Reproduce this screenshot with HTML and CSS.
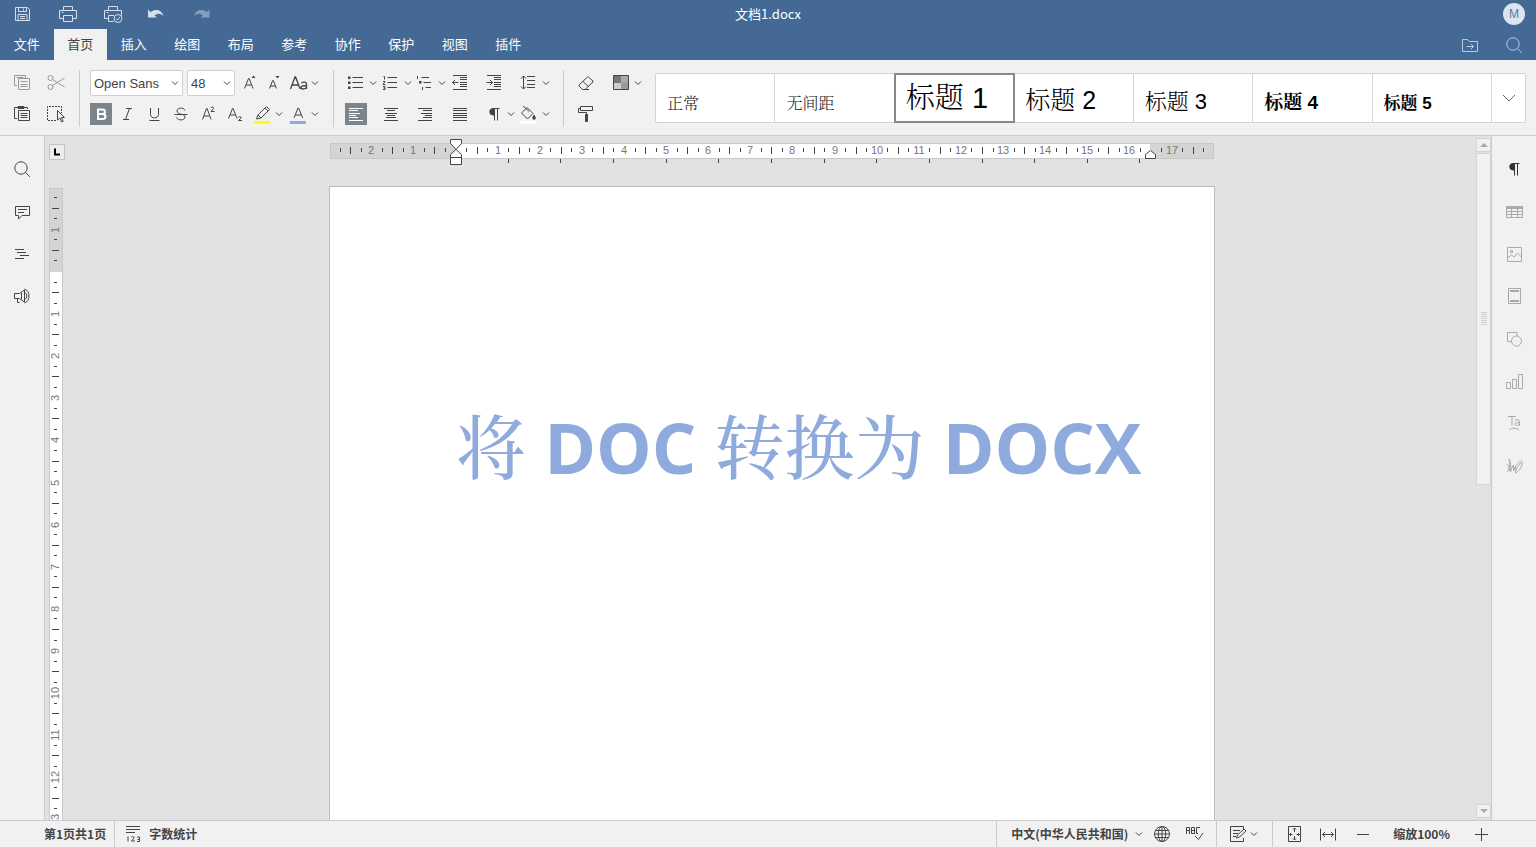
FILE: index.html
```html
<!DOCTYPE html>
<html lang="zh-CN">
<head>
<meta charset="utf-8">
<title>文档1.docx</title>
<link rel="stylesheet" href="styles.css">
</head>
<body>
<svg class="defs" aria-hidden="true">
  <symbol id="chev" viewBox="0 0 8 8"><path d="M1 2.5 4 5.5 7 2.5"/></symbol>
  <symbol id="search" viewBox="0 0 20 20"><circle cx="9" cy="9" r="6.2"/><path d="m13.5 13.5 4.5 4.3"/></symbol>
  <symbol id="para" viewBox="0 0 20 20"><path class="solid" d="M10.5 4.5v6.5H9A3.2 3.2 0 0 1 9 4.500z"/><path d="M9 4.500h6.500M10.500 4.500v12M13.500 4.500v12"/></symbol>
</svg>

<header class="header">
  <div class="titlebar">
    <div class="quick">
      <button aria-label="保存"><svg class="ic" viewBox="0 0 20 20"><path d="M2.500 3.500h12l2 2v11h-14zM5.500 3.500v4h8v-4M10.500 4.500v2M5 16.500v-6h9v6M7 12.500h5M7 14.500h5"/></svg></button>
      <button aria-label="打印"><svg class="ic" viewBox="0 0 20 20"><path d="M5.500 6.500v-4h9v4M5 14.500H1.500v-8h17v8H15M5.500 11.500h9v6h-9zM3.500 8.500h2"/></svg></button>
      <button aria-label="快速打印"><svg class="ic" viewBox="0 0 20 20"><path d="M5.500 6.500v-4h9v4M5 14.500H1.500v-8h17v5M11 11.500H5.500v6h5M3.500 8.500h2"/><circle cx="15" cy="14.500" r="4"/><path d="m13 14.500 1.500 1.500 2.500-3"/></svg></button>
      <button aria-label="撤消"><svg class="ic" viewBox="0 0 20 20"><path class="solid bare" d="M0 5.500 2.500 8c5-3.500 11-2.500 13 4-3-2.500-6-3-9-.500L9 13.500H0z"/></svg></button>
      <button aria-label="重做" class="dim"><svg class="ic" viewBox="0 0 20 20"><path class="solid bare" d="M16.500 5.500 14 8C9 4.500 3 5.500 1 12c3-2.500 6-3 9-.500l-2.500 2h9z"/></svg></button>
    </div>
    <div class="doc-name">文档1.docx</div>
    <div class="user"><span class="avatar">M</span></div>
  </div>
  <div class="tabbar">
    <nav class="tabs">
      <button>文件</button><button class="active">首页</button><button>插入</button><button>绘图</button><button>布局</button><button>参考</button><button>协作</button><button>保护</button><button>视图</button><button>插件</button>
    </nav>
    <div class="tab-tools">
      <button aria-label="打开文件位置"><svg class="ic" viewBox="0 0 20 20"><path d="M3.500 4.500h5l2 2h8v10h-15zM7.500 11.500h7M12 9l2.500 2.500L12 14"/></svg></button>
      <button aria-label="搜索"><svg class="ic"><use href="#search"/></svg></button>
    </div>
  </div>
</header>

<section class="toolbar">
  <div class="group clip">
    <button class="tb faded" aria-label="复制"><svg class="ic" viewBox="0 0 20 20"><path d="M5 12.500H2.500v-10h11V5M6.500 5.500h11v11h-11zM8.500 8.500h7M8.500 11.500h7M8.500 13.500h7M4.500 4.500h7"/></svg></button>
    <button class="tb faded" aria-label="剪切"><svg class="ic" viewBox="0 0 20 20"><circle cx="4.500" cy="5" r="2.500"/><circle cx="4.500" cy="14" r="2.500"/><path d="m6.500 6.500 12 7.500M6.500 12.500l12-7.500"/></svg></button>
    <button class="tb" aria-label="粘贴"><svg class="ic" viewBox="0 0 20 20"><path d="M5 14.500H2.500v-11h13V5M6.500 6.500h11v10h-11zM8.500 9.500h7M8.500 11.500h7M8.500 13.500h7"/><path class="solid" d="M6 2.500h6v2H6z"/></svg></button>
    <button class="tb" aria-label="全选"><svg class="ic" viewBox="0 0 20 20"><path stroke-dasharray="2 1" d="M10 16.500H1.500v-14h14V9"/><path class="paper" d="M11.500 6.500v9.500l2.300-2 1.700 4 1.600-.700-1.700-3.800h3z"/></svg></button>
  </div>

  <div class="group font">
    <div class="row">
      <label class="combo family"><select aria-label="字体"><option>Open Sans</option></select><svg class="chev"><use href="#chev"/></svg></label>
      <label class="combo size"><select aria-label="字号"><option>48</option></select><svg class="chev"><use href="#chev"/></svg></label>
      <button class="tb" aria-label="增大字号"><svg class="ic" viewBox="0 0 20 20"><path d="m4.500 15.500 4-10h.600l4 10M6 12h5.500"/><path class="solid bare" d="m13.500 2.500 2 2.500h-4z"/></svg></button>
      <button class="tb" aria-label="减小字号"><svg class="ic" viewBox="0 0 20 20"><path d="m5.500 15.500 3.200-8h.600l3.200 8M6.500 13h5"/><path class="solid bare" d="m13.500 5.500 2-2.500h-4z"/></svg></button>
      <button class="tb push" aria-label="更改大小写"><svg class="ic" viewBox="0 0 20 20"><path stroke-width="1.300" d="m1.500 16 4.500-12h.600l4.500 12M3 12h6.500M12.500 10c2-1.500 5-1 5 1v5M17.500 12.500c-3 0-5.500.300-5.500 2s4 2.500 5.500-.500"/></svg></button>
      <button class="dd" aria-label="大小写选项"><svg class="chev"><use href="#chev"/></svg></button>
    </div>
    <div class="row spaced">
      <button class="tb on" aria-label="加粗"><svg class="ic" viewBox="0 0 20 20"><path class="heavy" d="M7 5.500h4c4 0 4 4.500 0 4.500H7zM7 10h4.500c4 0 4 5 0 5H7z"/></svg></button>
      <button class="tb" aria-label="倾斜"><svg class="ic" viewBox="0 0 20 20"><path d="M8 4.500h6M5 15.500h6M11.500 4.500l-4 11"/></svg></button>
      <button class="tb" aria-label="下划线"><svg class="ic" viewBox="0 0 20 20"><path d="M5.500 4v6.500c0 4.500 8 4.500 8 0V4M4.500 16.500h10"/></svg></button>
      <button class="tb" aria-label="删除线"><svg class="ic" viewBox="0 0 20 20"><path d="M13 6.500C12 3 5 3.500 5 7c0 2 2 2.500 3.500 3 2 .600 4.500 1 4.500 3 0 3.500-7 4-8.500.500M2.500 10.500h13"/></svg></button>
      <button class="tb" aria-label="上标"><svg class="ic" viewBox="0 0 20 20"><path d="m3.500 15.500 4-11h.600l4 11M5 12h5.500M12 4c.500-1.500 3-1.200 2.500.500L12 7.500h3.500"/></svg></button>
      <button class="tb" aria-label="下标"><svg class="ic" viewBox="0 0 20 20"><path d="m2.500 14.500 4-10h.600l4 10M4 11h5.500M12.500 13.500c.500-1.500 3-1.200 2.500.500l-2.500 2.500H16"/></svg></button>
      <span class="split">
        <button class="tb" aria-label="突出显示颜色"><svg class="ic" viewBox="0 0 20 20"><path d="m5 11 8.500-8.500 3 3L8 14l-4.500 1zM5 11l3 3M12 4l3 3"/><path class="yellow" d="M1 17h16v3H1z"/></svg></button><button class="dd" aria-label="突出显示选项"><svg class="chev"><use href="#chev"/></svg></button><button class="tb" aria-label="字体颜色"><svg class="ic" viewBox="0 0 20 20"><path d="m5 14 4-10h.600l4 10M6.500 11h5.500"/><path class="blue" d="M1 17h16v3H1z"/></svg></button><button class="dd" aria-label="字体颜色选项"><svg class="chev"><use href="#chev"/></svg></button>
      </span>
    </div>
  </div>

  <div class="group paragraph">
    <span class="cell"><button class="tb" aria-label="项目符号"><svg class="ic" viewBox="0 0 20 20"><path d="M6.500 4.500H17M6.500 9.500H17M6.500 14.500H17"/><path class="solid bare" d="M2 3.500h2.500v2.500H2zM2 8.500h2.500v2.500H2zM2 13.500h2.500v2.500H2z"/></svg></button><button class="dd" aria-label="项目符号选项"><svg class="chev"><use href="#chev"/></svg></button></span>
    <span class="cell"><button class="tb" aria-label="编号"><svg class="ic" viewBox="0 0 20 20"><path d="M6.500 4.500H16M6.500 9.500H16M6.500 14.500H16M2.500 3.500h1v3M2 8.500h2l-2 3h2.500M2 13.500h2v3H2M2.500 15h1.500"/></svg></button><button class="dd" aria-label="编号选项"><svg class="chev"><use href="#chev"/></svg></button></span>
    <span class="cell"><button class="tb" aria-label="多级列表"><svg class="ic" viewBox="0 0 20 20"><path d="M6.500 4.500H14M8.500 9.500H16M10.500 14.500H16M2.500 3v3M7.500 14v3"/><path class="solid bare" d="M4 8h2.500v2.500H4z"/></svg></button><button class="dd" aria-label="多级列表选项"><svg class="chev"><use href="#chev"/></svg></button></span>
    <span class="cell"><button class="tb" aria-label="减少缩进"><svg class="ic" viewBox="0 0 20 20"><path d="M3 2.500h14M10 4.500h7M10 6.500h7M10 9.500h7M10 11.500h7M10 13.500h7M3 16.500h14M8.500 9.500h-6M5 7 2.500 9.500 5 12"/></svg></button></span>
    <span class="cell"><button class="tb" aria-label="增加缩进"><svg class="ic" viewBox="0 0 20 20"><path d="M3 2.500h14M10 4.500h7M10 6.500h7M10 9.500h7M10 11.500h7M10 13.500h7M3 16.500h14M2.500 9.500h6M6 7l2.500 2.500L6 12"/></svg></button></span>
    <span class="cell"><button class="tb" aria-label="行距"><svg class="ic" viewBox="0 0 20 20"><path d="M8 3.500h8M8 7.500h8M8 11.500h8M8 14.500h8M4.500 3v13M2 5.500 4.500 3 7 5.500M2 13.500 4.500 16 7 13.500"/></svg></button><button class="dd" aria-label="行距选项"><svg class="chev"><use href="#chev"/></svg></button></span>
    <span class="cell"><button class="tb on" aria-label="左对齐"><svg class="ic" viewBox="0 0 20 20"><path d="M3 4.500h14M3 6.500h9M3 9.500h11M3 11.500h7M3 13.500h9M3 16.500h14"/></svg></button></span>
    <span class="cell"><button class="tb" aria-label="居中"><svg class="ic" viewBox="0 0 20 20"><path d="M3 4.500h14M6 6.500h8M4 9.500h12M6 11.500h8M5 13.500h10M3 16.500h14"/></svg></button></span>
    <span class="cell"><button class="tb" aria-label="右对齐"><svg class="ic" viewBox="0 0 20 20"><path d="M3 4.500h14M8 6.500h9M6 9.500h11M10 11.500h7M8 13.500h9M3 16.500h14"/></svg></button></span>
    <span class="cell"><button class="tb" aria-label="两端对齐"><svg class="ic" viewBox="0 0 20 20"><path d="M3 4.500h14M3 6.500h14M3 9.500h14M3 11.500h14M3 13.500h14M3 16.500h14"/></svg></button></span>
    <span class="cell"><button class="tb" aria-label="非打印字符"><svg class="ic"><use href="#para"/></svg></button><button class="dd" aria-label="非打印字符选项"><svg class="chev"><use href="#chev"/></svg></button></span>
    <span class="cell"><button class="tb" aria-label="底纹"><svg class="ic" viewBox="0 0 20 20"><path class="white" d="M1 17h16v3H1z"/><path d="M8 3.500 14 9.500 8.500 15l-6-6L8 3.500zM4 2l6 5.500"/><path class="solid bare" d="M15 10.500c1 1.500 1.800 2.500 1.800 3.500a1.700 1.700 0 0 1-3.500 0c0-1 .700-2 1.700-3.500"/></svg></button><button class="dd" aria-label="底纹选项"><svg class="chev"><use href="#chev"/></svg></button></span>
  </div>

  <div class="group misc">
    <span class="cell"><button class="tb" aria-label="清除样式"><svg class="ic" viewBox="0 0 20 20"><path d="m3 12 8.500-8h1l4.500 4v1l-8 7.500H6.500L3 13zM7 8.500l5.500 5M9 16.500h4"/></svg></button></span>
    <span class="cell"><button class="tb" aria-label="颜色方案"><svg class="ic" viewBox="0 0 20 20"><g class="bare"><path fill="#777" d="M3 3h7v7H3z"/><path fill="#aaa" d="M10 3h7v7h-7z"/><path fill="#ccc" d="M3 10h7v7H3z"/><path fill="#999" d="M10 10h7v7h-7z"/></g><path d="M2.500 2.500h15v14h-15z"/></svg></button><button class="dd" aria-label="颜色方案选项"><svg class="chev"><use href="#chev"/></svg></button></span>
    <span class="cell"><button class="tb" aria-label="复制样式"><svg class="ic" viewBox="0 0 20 20"><path d="M4.500 2.500h12v4h-12zM4.500 4.500h-2v4h8v2"/><path class="solid" d="M9.500 10.500h2v7h-2z"/></svg></button></span>
  </div>

  <div class="gallery">
    <button class="style s0">正常</button>
    <button class="style s0">无间距</button>
    <button class="style s1 chosen">标题 1</button>
    <button class="style s2">标题 2</button>
    <button class="style s3">标题 3</button>
    <button class="style s4">标题 4</button>
    <button class="style s5">标题 5</button>
    <button class="more" aria-label="更多样式"><svg viewBox="0 0 14 8"><path d="m1 1 6 6 6-6"/></svg></button>
  </div>
</section>

<main class="main">
  <aside class="rail left">
    <button aria-label="查找"><svg class="ic"><use href="#search"/></svg></button>
    <button aria-label="评论"><svg class="ic" viewBox="0 0 20 20"><path d="M3.500 4.500h14v9H10L6.500 17v-3.500h-3zM6 7.500h9M6 10.500h6"/></svg></button>
    <button aria-label="标题"><svg class="ic" viewBox="0 0 20 20"><path d="M3 5.500h9M5 8.500h9M8 11.500h9M3 14.500h9"/></svg></button>
    <button aria-label="反馈和支持"><svg class="ic" viewBox="0 0 20 20"><path d="M2.500 7.500h5l5-3.500v12l-5-3.500h-5zM5.500 12.500v4h2M12.500 3c6 1.500 6 12.500 0 14M12.500 6.500c3 1 3 6 0 7M9.500 6.500v7"/></svg></button>
  </aside>

  <div class="editor">
    <button class="tabstop" aria-label="制表位"><svg viewBox="0 0 14 14"><path d="M5 3.500v6h5"/></svg></button>
    <svg id="hruler" class="hruler" width="884" height="28"></svg>
    <div class="vruler"><svg id="vruler" width="14" height="1250"></svg></div>
    <div class="sheet-area">
      <article class="page"><h1><span class="thin">将</span> DOC <span class="thin">转换为</span> DOCX</h1></article>
    </div>
    <div class="scrollbar">
      <button aria-label="向上滚动"><svg viewBox="0 0 8 4"><path d="M0 4 4 0l4 4z"/></svg></button>
      <div class="track"><div class="thumb"><i></i><i></i><i></i><i></i><i></i><i></i><i></i></div></div>
      <button aria-label="向下滚动"><svg viewBox="0 0 8 4"><path d="m0 0 4 4 4-4z"/></svg></button>
    </div>
  </div>

  <aside class="rail right">
    <button aria-label="段落设置" class="enabled"><svg class="ic"><use href="#para"/></svg></button>
    <button aria-label="表格设置"><svg class="ic" viewBox="0 0 20 20"><path d="M2.500 4.500h16v11h-16zM2.500 9.500h16M2.500 12.500h16M7.500 6v9.500M13.500 6v9.500"/><path class="solid" d="M2.500 4.500h16v2h-16z"/></svg></button>
    <button aria-label="图片设置"><svg class="ic" viewBox="0 0 20 20"><path d="M3.500 3.500h14v14h-14zM3.500 14l4-3 2.500 2 3.500-4 4 4M6.500 6.500h2v2h-2z"/></svg></button>
    <button aria-label="页眉页脚设置"><svg class="ic" viewBox="0 0 20 20"><path d="M4.500 2.500h12v15h-12z"/><path d="M6 4.500h9M6 5.500h9M6 15.500h9M6 14.500h9"/></svg></button>
    <button aria-label="形状设置"><svg class="ic" viewBox="0 0 20 20"><path d="M7 12.500H3.500v-9h9.500V7"/><circle cx="12.500" cy="12" r="5"/></svg></button>
    <button aria-label="图表设置"><svg class="ic" viewBox="0 0 20 20"><path d="M2.500 11.500h4v6h-4zM8.500 8.500h4v9h-4zM14.500 3.500h4v14h-4z"/></svg></button>
    <button aria-label="艺术字设置"><svg class="ic" viewBox="0 0 20 20"><path d="M4 3.500h8M8 3.500v9M11 7.500c2-1.500 4.500-.500 4.500 1v4M15.500 9.500c-3 0-4.500.500-4.500 1.500 0 2 3 2 4.500 0M5 17c3-2.500 7-2.500 10 0"/></svg></button>
    <button aria-label="签名设置"><svg class="ic" viewBox="0 0 20 20"><path d="M2.500 9c2-1 2 0 2.500 6 1-5 1-9 0-12 2 4 2 9 1.500 13 1-4 2-6 3-7v6c1-4 3-7 7-9.500 2-1.500 2 1 1.500 3-1 4-3.500 7-6.500 8.500 0-4 2-7 5.500-10M3 16l3-3M11 15l1-4"/></svg></button>
  </aside>
</main>

<footer class="status">
  <button class="pages">第1页共1页</button>
  <button class="count"><svg class="ic" viewBox="0 0 20 20"><path d="M3 2.500h14M3 5.500h14M3 8.500h9M5 12.500v5M8.500 13c1-1 3-.500 2.500 1l-2.500 3H12M14 13h2.500v4.500H14M14.500 15.500h2"/></svg>字数统计</button>
  <div class="spacer"></div>
  <div class="zone lang"><button class="lang-name">中文(中华人民共和国)<svg class="chev"><use href="#chev"/></svg></button>
    <button class="tb" aria-label="文档语言"><svg class="ic" viewBox="0 0 20 20"><circle cx="10" cy="10" r="7.500"/><ellipse cx="10" cy="10" rx="3.700" ry="7.500"/><path d="M10 2.500v15M3.500 6.500h13M3.500 13.500h13M2.500 10h15"/></svg></button>
    <button class="tb spell" aria-label="拼写检查"><svg class="ic" viewBox="0 0 20 20"><path d="M2.500 10V3.500h3V10M2.500 6.500h3M7.500 3.500h3v6h-3zM7.500 6.500h3M16 3.500h-3.500v6H14M11 12l3.500 3.500L19 9"/></svg></button></div>
  <div class="zone review"><button class="tb" aria-label="跟踪修改"><svg class="ic" viewBox="0 0 20 20"><path d="M15.500 6V2.500h-13v15h13V14M5 6.500h7M5 9.500h5M5 12.500h3M8.500 14l1-3L16 5l2 2-6.500 6z"/></svg></button><button class="dd" aria-label="跟踪修改选项"><svg class="chev"><use href="#chev"/></svg></button></div>
  <div class="zone zoom">
    <button class="tb" aria-label="适合页面"><svg class="ic" viewBox="0 0 20 20"><path d="M4.500 2.500h12v15h-12zM10.500 4v4M9 5.500l1.500-1.500L12 5.500M10.500 16v-4M9 14.500l1.500 1.500 1.500-1.500M5.500 10.500h3M7 9l-1.500 1.500L7 12M15.500 10.500h-3M14 9l1.500 1.500L14 12"/></svg></button>
    <button class="tb" aria-label="适合宽度"><svg class="ic" viewBox="0 0 20 20"><path d="M2.500 4.500v12M17.500 4.500v12M4.500 10.500h11M7 8l-2.500 2.500L7 13M13 8l2.500 2.500L13 13"/></svg></button>
    <button class="tb" aria-label="缩小"><svg class="ic" viewBox="0 0 20 20"><path d="M5 10.500h12"/></svg></button>
    <button class="zoom-value">缩放100%</button>
    <button class="tb" aria-label="放大"><svg class="ic" viewBox="0 0 20 20"><path d="M4 10.500h13M10.500 4v13"/></svg></button>
  </div>
</footer>
<script src="rulers.js"></script>
</body>
</html>
```

FILE: styles.css
```css
* { box-sizing: border-box; }
body {
  margin: 0;
  height: 100vh;
  display: flex;
  flex-direction: column;
  overflow: hidden;
  background: #f1f1f1;
  color: #444;
  font: 12px "Liberation Sans", "Noto Sans CJK SC", sans-serif;
}
button { border: 0; padding: 0; margin: 0; background: none; color: inherit; font: inherit; }
svg { display: block; fill: none; stroke: currentColor; }
.defs { position: absolute; width: 0; height: 0; }
.ic { width: 20px; height: 20px; flex: none; }
.chev { width: 8px; height: 8px; flex: none; }
.solid { fill: currentColor; }
.bare { stroke: none; }
.heavy { stroke-width: 2; }
.paper { fill: #f1f1f1; }
.yellow { fill: #ff0; stroke: none; }
.blue { fill: #8faadc; stroke: none; }
.white { fill: #fff; stroke: none; }

/* Header */
.header { background: #446995; color: #fff; font-family: "Noto Sans CJK SC", sans-serif; }
.titlebar { display: grid; grid-template-columns: 1fr auto 1fr; align-items: center; height: 29px; padding-bottom: 2px; }
.quick { display: flex; }
.quick button { width: 45px; display: grid; justify-content: center; color: #d5e0ee; }
.quick .dim { opacity: .45; }
.doc-name { font-size: 13px; line-height: 20px; }
.user { display: flex; justify-content: flex-end; padding-right: 11px; }
.avatar { width: 22px; height: 22px; border-radius: 50%; background: #dce4ef; color: #5b79a3; font: 12px/22px "Liberation Sans", sans-serif; text-align: center; }
.tabbar { display: flex; justify-content: space-between; height: 31px; }
.tabs { display: grid; grid-template-columns: repeat(10, 1fr); width: 535px; font-size: 13px; }
.tabs button { padding-bottom: 2px; }
.tabs .active { background: #f1f1f1; color: #444; }
.tab-tools { display: flex; gap: 25px; align-items: center; padding-right: 12px; color: #b9cbe2; }

/* Toolbar */
.toolbar { display: flex; height: 76px; padding: 10px 10px 0 11px; border-bottom: 1px solid #cbcbcb; }
.group { height: 57px; }
.tb { width: 22px; height: 22px; display: grid; place-items: center; flex: none; }
.tb.on { background: #7d858c; color: #fff; }
.dd { width: 12px; height: 22px; display: grid; justify-content: start; align-items: center; padding-left: 1px; flex: none; }
.faded { color: #999; }
.clip { display: grid; grid-template-columns: 34px 34px; grid-template-rows: 26px 35px; align-items: center; border-right: 1px solid #cbcbcb; }
.font { padding: 0 11px 0 10px; border-right: 1px solid #cbcbcb; }
.row { display: flex; align-items: center; height: 26px; }
.row.spaced { gap: 5px; margin-top: 5px; }
.split, .cell { display: flex; align-items: center; }
.split .dd + .tb { margin-left: 2px; }
.combo { position: relative; display: block; height: 26px; margin-right: 4px; }
.combo select { display: block; width: 100%; height: 26px; padding: 0 3px; border: 1px solid #cfcfcf; border-radius: 2px; background: #fff; color: #444; font: 13px "Liberation Sans", sans-serif; appearance: none; }
.combo .chev { position: absolute; right: 4px; top: 9px; }
.family { width: 93px; }
.size { width: 48px; }
.combo + .tb { margin-right: 2px; }
.push { margin-left: 3px; }
.paragraph { display: grid; grid-template-columns: 35px 34px 35px 34px 35px 34px; grid-template-rows: 26px 35px; align-items: center; padding: 0 11px; border-right: 1px solid #cbcbcb; }
.misc { display: grid; grid-template-columns: 35px 35px; grid-template-rows: 26px 35px; align-items: center; padding: 0 10px 0 11px; }
.paragraph .dd, .misc .dd { padding-left: 2px; }
.gallery { flex: 1; display: grid; grid-template-columns: repeat(7, 1fr) 33px; height: 50px; margin-top: 3px; background: #fff; border: 1px solid #d5d5d5; border-radius: 2px; }
.style { display: flex; align-items: baseline; height: 48px; padding-left: 11px; color: #222; border-right: 1px solid #d5d5d5; text-align: left; line-height: 48px; white-space: nowrap; font-family: "Liberation Sans", "Noto Serif CJK SC", "Noto Sans CJK SC", sans-serif; font-weight: 300; }
.chosen { outline: 2px solid #888; outline-offset: -1px; }
.s0 { font-size: 16px; padding-top: 6px; }
.s1 { font-size: 29px; color: #000; }
.s2 { font-size: 25px; padding-top: 2px; color: #000; }
.s3 { font-size: 22px; padding-top: 4px; color: #000; }
.s4 { font-size: 19px; padding-top: 5px; color: #000; font-weight: 700; }
.s5 { font-size: 17px; padding-top: 6px; color: #000; font-weight: 700; }
.more { display: grid; place-items: center; color: #666; }
.more svg { width: 14px; height: 8px; }

/* Workspace */
.main { flex: 1; min-height: 0; display: flex; }
.rail { width: 44px; flex: none; display: grid; grid-template-rows: repeat(8, 1fr); height: 351px; padding-top: 12px; }
.rail button { display: grid; place-items: center; }
.right { color: #aaa; }
.right .enabled { color: #333; }
.editor { flex: 1; min-width: 0; display: grid; grid-template-columns: 23px 1fr 15px; grid-template-rows: 50px 1fr; background: #e2e2e2; border-left: 1px solid #cbcbcb; border-right: 1px solid #cbcbcb; overflow: hidden; }
.tabstop { width: 16px; height: 16px; margin: 8px 0 0 4px; border: 1px solid #c4c4c4; background: #ececec; color: #000; }
.tabstop svg { width: 14px; height: 14px; stroke-width: 2; }
.hruler { justify-self: center; margin-top: 2px; }
.vruler { grid-row: 2; grid-column: 1; overflow: hidden; padding: 2px 0 0 4px; }
.sheet-area { grid-row: 2; grid-column: 2; overflow: hidden; display: flex; justify-content: center; }
.page { width: 886px; height: 1252px; flex: none; background: #fff; border: 1px solid #bdbdbd; padding: 205px 0 0 126px; }
.page h1 { margin: 0; color: #8faadc; font: 700 70px/110px "Open Sans", "Noto Serif CJK SC", "Noto Sans CJK SC", sans-serif; white-space: nowrap; }
.page .thin { font-weight: 500; }
.scrollbar { grid-row: 1 / 3; grid-column: 3; display: flex; flex-direction: column; padding: 2px 0; gap: 1px; min-height: 0; }
.scrollbar button { height: 14px; display: grid; place-items: center; background: #f1f1f1; border: 1px solid #d4d4d4; color: #aaa; }
.scrollbar svg { width: 8px; height: 4px; fill: currentColor; stroke: none; }
.track { flex: 1; min-height: 0; }
.thumb { height: 51%; display: flex; flex-direction: column; justify-content: center; align-items: center; gap: 1px; background: #f1f1f1; border: 1px solid #d4d4d4; }
.thumb i { width: 6px; height: 1px; background: #cfcfcf; }

/* Rulers */
.r-out { fill: #d4d4d4; stroke: #c8c8c8; }
.r-in { fill: #fff; stroke: none; }
.r-line { stroke: #444; stroke-width: 1; shape-rendering: crispEdges; }
.r-num { fill: #777; stroke: none; font: 11px "Liberation Sans", sans-serif; text-anchor: middle; }
.r-mark { fill: #fff; stroke: #444; }

/* Status bar */
.status { display: flex; height: 27px; border-top: 1px solid #cbcbcb; font: 700 12px/26px "Noto Sans CJK SC", sans-serif; }
.status > *, .zone { display: flex; align-items: center; }
.pages { padding: 0 8px 0 44px; border-right: 1px solid #cbcbcb; }
.count { padding-left: 8px; gap: 6px; }
.spacer { flex: 1; }
.zone { border-left: 1px solid #cbcbcb; }
.lang { padding: 0 11px 0 14px; }
.lang-name { display: flex; align-items: center; gap: 7px; margin-right: 8px; }
.spell { margin-left: 10px; }
.review { padding: 0 11px 0 10px; }
.zoom { padding: 0 44px 0 10px; gap: 12px; }
.zoom .zoom-value { margin: 0 8px; }
```

FILE: rulers.js
```js
const CM = 42.12;
const NS = "http://www.w3.org/2000/svg";

function add(svg, tag, cls, attrs, text) {
  const el = document.createElementNS(NS, tag);
  el.setAttribute("class", cls);
  for (const k in attrs) el.setAttribute(k, attrs[k]);
  if (text !== undefined) el.textContent = text;
  svg.appendChild(el);
}

function drawHorizontal(svg) {
  const zero = 126, end = 820, width = 884;
  add(svg, "rect", "r-out", { x: 0.5, y: 5.5, width: width - 1, height: 15 });
  add(svg, "rect", "r-in", { x: zero, y: 6, width: end - zero, height: 14 });
  for (let q = -11; q <= 71; q++) {
    const x = Math.floor(zero + q * CM / 4);
    if (q === 0 || q === 66) continue;
    if (q % 4 === 0) add(svg, "text", "r-num", { x, y: 16 }, Math.abs(q / 4));
    else if (q % 2 === 0) add(svg, "path", "r-line", { d: `M${x + 0.5} 9v7` });
    else add(svg, "path", "r-line", { d: `M${x + 0.5} 10v4` });
  }
  for (let t = 1; t <= 13; t++) {
    add(svg, "path", "r-line", { d: `M${Math.round(zero + t * 1.25 * CM) - 0.5} 21v4` });
  }
  add(svg, "path", "r-mark", { d: "M120.500 1.500h11v4l-5.500 6-5.500-6zM126 11.500l5.500 5v3h-11v-3zM120.500 19.500h11v7h-11z" });
  add(svg, "path", "r-mark", { d: "M815.500 20.500v-4l5-4 5 4v4z" });
}

function drawVertical(svg) {
  const zero = 84;
  const visible = svg.parentElement.clientHeight;
  add(svg, "rect", "r-out", { x: 0.5, y: 0.5, width: 13, height: 1249 });
  add(svg, "rect", "r-in", { x: 1, y: zero, width: 12, height: 1082 });
  for (let q = -7; q <= 102; q++) {
    const y = Math.round(zero + q * CM / 4);
    if (q === 0) continue;
    if (y > visible) break;
    if (q % 4 === 0) add(svg, "text", "r-num", { x: 0, y: 0, transform: `translate(10 ${y}) rotate(-90)` }, Math.abs(q / 4));
    else if (q % 2 === 0) add(svg, "path", "r-line", { d: `M3 ${y - 0.5}h7` });
    else add(svg, "path", "r-line", { d: `M5 ${y - 0.5}h3` });
  }
}

drawHorizontal(document.getElementById("hruler"));
drawVertical(document.getElementById("vruler"));
```
